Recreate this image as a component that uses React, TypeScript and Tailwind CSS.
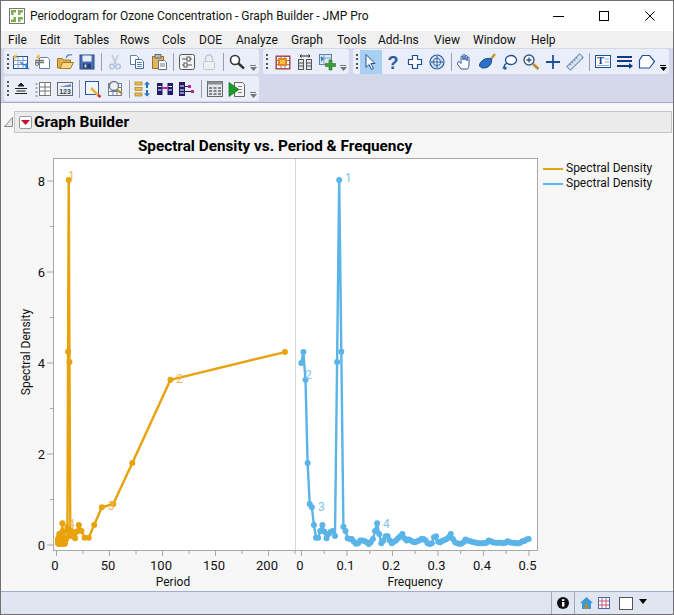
import React from 'react';

const vals = [4.0,4.24,3.63,1.8,0.9,0.83,0.44,0.16,0.16,0.31,0.44,0.29,0.15,0.24,0.29,0.31,0.2,4.02,8.02,4.25,0.4,0.31,0.15,0.13,0.13,0.07,0.03,0.04,0.1,0.1,0.09,0.06,0.02,0.06,0.13,0.31,0.48,0.24,0.04,0.1,0.19,0.19,0.1,0.04,0.07,0.1,0.15,0.19,0.24,0.15,0.1,0.12,0.1,0.07,0.06,0.08,0.1,0.13,0.13,0.1,0.04,0.02,0.04,0.17,0.19,0.07,0.06,0.09,0.11,0.13,0.17,0.24,0.13,0.06,0.04,0.03,0.03,0.06,0.12,0.1,0.09,0.07,0.06,0.05,0.04,0.04,0.04,0.04,0.05,0.1,0.08,0.06,0.05,0.05,0.05,0.05,0.04,0.05,0.08,0.06,0.05,0.05,0.04,0.04,0.05,0.08,0.09,0.12,0.13];
const yOf = (v: number) => 545 - v * 45.5;
const freqPts = vals.map((v, k) => [301.3 + (k / 216) * 454.8, yOf(v)] as const);
const perPts = vals.slice(1).map((v, i) => [56 + (1.06 * 216) / (i + 1), yOf(v)] as const);

function Series({ pts, color }: { pts: readonly (readonly [number, number])[]; color: string }) {
  return (
    <g>
      <polyline points={pts.map((p) => p.join(',')).join(' ')} fill="none" stroke={color} strokeWidth={2.4} strokeLinejoin="round" />
      {pts.map((p, i) => <circle key={i} cx={p[0]} cy={p[1]} r={3} fill={color} />)}
    </g>
  );
}

function Chart() {
  const yMajor = [8, 6, 4, 2, 0];
  const yMinor = [7, 5, 3, 1];
  const xLeft = [0, 50, 100, 150, 200];
  const xRight = ['0', '0.1', '0.2', '0.3', '0.4', '0.5'];
  return (
    <svg width={537} height={435} viewBox="1 155 537 435" className="block shrink-0 font-['Roboto',sans-serif]">
      <rect x={53.5} y={158.5} width={484} height={392} fill="#fff" stroke="#a8a8a8" />
      <line x1={295.5} x2={295.5} y1={159} y2={550} stroke="#d9d9d9" />
      {yMajor.map((v) => (
        <g key={v}>
          <line x1={47} x2={53} y1={yOf(v)} y2={yOf(v)} stroke="#a8a8a8" />
          <text x={45} y={yOf(v) + 4.5} textAnchor="end" fontSize={13} fill="#111">{v}</text>
        </g>
      ))}
      {yMinor.map((v) => <line key={v} x1={50} x2={53} y1={yOf(v)} y2={yOf(v)} stroke="#a8a8a8" />)}
      {Array.from({ length: 10 }, (_, i) => (
        <line key={i} x1={56.5 + i * 26.5} x2={56.5 + i * 26.5} y1={551} y2={i % 2 ? 554 : 556} stroke="#a8a8a8" />
      ))}
      {Array.from({ length: 11 }, (_, i) => (
        <line key={i} x1={301.5 + i * 22.74} x2={301.5 + i * 22.74} y1={551} y2={i % 2 ? 554 : 556} stroke="#a8a8a8" />
      ))}
      {xLeft.map((v, i) => <text key={v} x={55 + i * 53} y={570} textAnchor="middle" fontSize={13} fill="#111">{v}</text>)}
      {xRight.map((v, i) => <text key={v} x={300 + i * 45.5} y={570} textAnchor="middle" fontSize={13} fill="#111">{v}</text>)}
      <text x={173} y={586} textAnchor="middle" fontSize={12} fill="#111">Period</text>
      <text x={415} y={586} textAnchor="middle" fontSize={12} fill="#111">Frequency</text>
      <text transform="translate(30 352) rotate(-90)" textAnchor="middle" fontSize={12} fill="#111">Spectral Density</text>
      <Series pts={perPts} color="#e8a20c" />
      <Series pts={freqPts} color="#5ab4e8" />
      <g fontSize={12} fill="#eeb84f">
        <text x={68} y={180}>1</text>
        <text x={176} y={383}>2</text>
        <text x={108} y={510}>3</text>
        <text x={68} y={528}>4</text>
      </g>
      <g fontSize={12} fill="#7fc4ec">
        <text x={345} y={182}>1</text>
        <text x={305} y={379}>2</text>
        <text x={318} y={511}>3</text>
        <text x={383} y={528}>4</text>
      </g>
    </svg>
  );
}

/* ---- toolbar icons: 18x18 drawings ---- */
const B = '#1c4f9c';
const Y = '#f0bd45';
type P = { children: React.ReactNode };
const Ico = ({ children }: P) => <svg width={18} height={18} viewBox="0 0 18 18" className="block">{children}</svg>;

const grid = (
  <g stroke="#6b7f9e" fill="none">
    <rect x="2.5" y="3.5" width="13" height="12" fill="#fff" />
    <path d="M2.5 7.5h13M2.5 11.5h13M7 3.5v12M11 3.5v12" />
  </g>
);

const icons: Record<string, React.ReactNode> = {
  newTable: <><rect x="1.5" y="3.5" width="14" height="12" fill="#fff" stroke={B} /><path d="M1.5 7.5h14M1.5 11.5h14M6 3.5v12M11 3.5v12" stroke="#7d9cc8" /><path d="M2 1l1 1.5 2-1-.7 2 1.7 1-2 .4L3 7 2.3 5 0 4.5l2-1z" fill={Y} /><path d="M8 9l4 3 3-1-1 3 3 2" stroke="#2f7fd0" strokeWidth="1.5" fill="none" /></>,
  newScript: <><path d="M5.5 4.5h8l2 2v9h-10z" fill="#fff" stroke="#5c7fb0" /><path d="M1 7.5h9M1 9.5h9" stroke="#777" strokeWidth="1.4" /><circle cx="3" cy="11" r="1.6" fill="none" stroke="#777" /><path d="M3 1l1 1.5 2-1-.7 2 1.7 1-2 .4L4 7 3.3 5 1 4.5l2-1z" fill={Y} /></>,
  open: <><path d="M1.5 5.5h5l1 1.5h7v8h-13z" fill="#e3b04f" stroke="#a67a22" /><path d="M4 15.5l2.5-6h11l-3 6z" fill="#f7d98b" stroke="#a67a22" /><path d="M10 5c1-3 4-4 6-3" stroke="#5b92cf" strokeWidth="1.4" fill="none" /></>,
  save: <><rect x="2" y="2" width="14" height="14" fill="#4a6fb5" stroke="#2b4a86" /><rect x="4.5" y="2.5" width="9" height="6" fill="#e7edf7" /><rect x="5" y="10.5" width="8" height="5" fill="#27406f" /><rect x="6.5" y="11.5" width="2" height="3" fill="#c9d5e8" /></>,
  cut: <g opacity=".45"><path d="M6 2l4 9M12 2l-4 9" stroke="#8a9cb5" strokeWidth="1.6" /><circle cx="6" cy="13.5" r="2.3" fill="none" stroke="#6f8fbf" strokeWidth="1.5" /><circle cx="12" cy="13.5" r="2.3" fill="none" stroke="#6f8fbf" strokeWidth="1.5" /></g>,
  copy: <><path d="M2.5 2.5h6l2 2v7h-8z" fill="#fff" stroke="#5c7fb0" /><path d="M7.5 6.5h6l2 2v7h-8z" fill="#fff" stroke="#3f69a8" /><path d="M9 9.5h5M9 11.5h5M9 13.5h5" stroke="#5c7fb0" /></>,
  paste: <><rect x="2.5" y="3.5" width="11" height="12" fill="#e2b661" stroke="#9a7426" /><rect x="5" y="1.5" width="6" height="3.5" fill="#bbb" stroke="#666" /><path d="M8.5 7.5h6l2 2v7h-8z" fill="#fff" stroke="#5c6f90" /><path d="M10 11h5M10 13h5" stroke="#778" /></>,
  sliders: <><rect x="1.5" y="1.5" width="15" height="15" rx="2" fill="#f4f4f4" stroke="#555" /><path d="M4 6h10M4 12h10" stroke="#555" /><rect x="9" y="4" width="3" height="4" fill="#fff" stroke="#555" /><rect x="6" y="10" width="3" height="4" fill="#fff" stroke="#555" /></>,
  lock: <><rect x="3.5" y="8.5" width="11" height="8" rx="1" fill="#eef0f4" stroke="#c3c7cf" /><path d="M5.5 8.5V5.5a3.5 3.5 0 017 0v3" fill="none" stroke="#c3c7cf" strokeWidth="1.4" /></>,
  search: <><circle cx="7" cy="7" r="4.5" fill="#fff" stroke="#333" strokeWidth="1.6" /><path d="M10.5 10.5l5.5 5" stroke="#333" strokeWidth="2.4" /></>,
  heat: <>{grid}<rect x="4" y="5" width="9" height="8" fill="#ef7d22" /><rect x="6" y="7" width="5" height="4" fill="#f8c940" /><rect x="2" y="3" width="14" height="13" fill="none" stroke="#b33" /></>,
  cols: <><path d="M4 3h10M4 3l1.5-1.5M4 3l1.5 1.5M14 3l-1.5-1.5M14 3l-1.5 1.5" stroke="#222" fill="none" /><rect x="2.5" y="6.5" width="5" height="10" fill="#dfe4ea" stroke="#555" /><rect x="10.5" y="6.5" width="5" height="10" fill="#dfe4ea" stroke="#555" /><path d="M2.5 10h5M2.5 13h5M10.5 10h5M10.5 13h5" stroke="#555" /></>,
  addTable: <><rect x="1.5" y="1.5" width="12" height="10" fill="#dbe8f3" stroke="#5c7fb0" /><path d="M1.5 5h12M6 1.5v10" stroke="#7fa3c7" /><path d="M3 3l3 3-3 3" fill="#2f7fd0" /><path d="M11 7h3v3.5h3.5v3H14V17h-3v-3.5H7.5v-3H11z" fill="#3f9a3a" stroke="#2a6f28" strokeWidth=".6" /></>,
  arrow: <path d="M4 1.5v13l3-3 2.5 5 2-1-2.5-5h4z" fill="#fff" stroke={B} />,
  help: <text x="9" y="15.5" textAnchor="middle" fontSize="18" fontWeight="800" fill="#2c5aa0" fontFamily="Liberation Sans">?</text>,
  cross: <path d="M6.5 2.5h5v4h4v5h-4v4h-5v-4h-4v-5h4z" fill="#fff" stroke={B} strokeWidth="1.2" />,
  target: <><circle cx="9" cy="9" r="7" fill="#cfe0f2" stroke="#2c5aa0" strokeWidth="1.2" /><circle cx="9" cy="9" r="3.6" fill="#fff" stroke="#2c5aa0" /><path d="M9 3v12M3 9h12" stroke="#2c5aa0" /></>,
  hand: <path d="M5 16c-2-3-4-5-3.500-6.500S4 9 5 10.500V4c0-1.500 2-1.500 2 0v3-4.500c0-1.500 2-1.500 2 0V7 3.500c0-1.500 2-1.500 2 0V8 5c0-1.500 2-1.500 2 0v7c0 2-1 3-1.500 4z" fill="#fff" stroke="#2c5aa0" />,
  brush: <><path d="M13 6L17 1" stroke="#c9973a" strokeWidth="2.5" /><path d="M1.500 12c1-5 8-8 12-6 1 4-2 9-8 9-2 0-4-1-4-3z" fill="#2a70c8" stroke="#174a8f" /></>,
  lasso: <><ellipse cx="11" cy="7" rx="5.500" ry="4.500" fill="#fff" stroke={B} strokeWidth="1.3" /><path d="M7 10c-2 1-3 3-3 4.500M4 14.500c0 2 2 2 2 .5s-3-1-3 .5" fill="none" stroke={B} strokeWidth="1.3" /></>,
  zoom: <><circle cx="7" cy="7" r="5" fill="#fff" stroke="#39597f" strokeWidth="1.4" /><path d="M4.500 7h5M7 4.500v5" stroke={B} strokeWidth="1.300" /><path d="M11 11l5.500 5" stroke="#b98a2c" strokeWidth="2.500" /></>,
  plus: <path d="M9 2v14M2 9h14" stroke={B} strokeWidth="1.800" />,
  ruler: <g transform="rotate(-45 9 9)"><rect x="0" y="6.500" width="18" height="5" fill="#dbe4f1" stroke="#6b87b5" /><path d="M4 6.500v2M7 6.500v2M10 6.500v2M13 6.500v2" stroke="#6b87b5" /></g>,
  textBox: <><rect x="1.500" y="2.500" width="15" height="12" fill="#fff" stroke="#1c4f9c" /><path d="M11 6h4M11 9h4M3 12.500h12" stroke="#8fa9cc" /><text x="6.500" y="11" textAnchor="middle" fontSize="10" fontWeight="700" fill="#0e3a80" fontFamily="Liberation Serif">T</text></>,
  lines: <><path d="M1 4h15M1 8h15" stroke="#14397c" strokeWidth="2" /><path d="M1 13h13" stroke="#14397c" strokeWidth="2" /><path d="M13 10l4 3-4 3z" fill="#14397c" /></>,
  shape: <path d="M4.500 2.500h7l5 6-5 6.500H1.500V7z" fill="#fff" stroke="#1c4f9c" strokeWidth="1.200" />,
  align: <path d="M9 3l3 3H6zM3 8.500h12M4.500 11h9M3 13.500h12" stroke="#222" fill="#222" />,
  gridDots: <><path d="M1.500 4h2M1.500 8h2M1.500 12h2M1.500 16h2" stroke="#666" /><rect x="5.500" y="2.500" width="11" height="13" fill="#fff" stroke="#777" /><path d="M5.500 7h11M5.500 11h11M11 2.500v13" stroke="#777" /></>,
  nums: <><rect x="1.500" y="2.500" width="15" height="13" fill="#eef2f7" stroke="#667" /><path d="M3 7l12-3v3z" fill="#6a93c4" /><text x="9" y="14" textAnchor="middle" fontSize="7" fontWeight="700" fill="#345" fontFamily="Liberation Sans">123</text></>,
  pencil: <><rect x="1.500" y="1.500" width="13" height="13" fill="#f2f6fc" stroke="#2c5aa0" /><path d="M7 8l7 7" stroke="#e8b33d" strokeWidth="2.500" /><path d="M14 15l2.500 2" stroke="#d22" strokeWidth="2.500" /></>,
  tableSearch: <>{grid}<circle cx="8" cy="6" r="4.500" fill="#eef4fb" stroke="#777" strokeWidth="1.300" /><path d="M11 9.500l5 4.500" stroke="#b98a2c" strokeWidth="2.200" /></>,
  sort: <><rect x="1" y="2" width="7" height="3" fill={Y} stroke="#96711f" strokeWidth=".6" /><rect x="1" y="7.500" width="7" height="3" fill={Y} stroke="#96711f" strokeWidth=".6" /><rect x="1" y="13" width="7" height="3" fill={Y} stroke="#96711f" strokeWidth=".6" /><path d="M13 1.500l3 3h-2V8h-2V4.500h-2zM13 16.500l3-3h-2V10h-2v3.500h-2z" fill="#2a6fc0" /></>,
  join: <><rect x="1" y="3" width="5.500" height="12" fill="#231a68" /><rect x="11.500" y="3" width="5.500" height="12" fill="#231a68" /><path d="M2 6.500h3.500M2 10h3.500M12.500 6.500H16M12.500 10H16" stroke="#fff" /><path d="M6.500 8h5" stroke="#c0209a" strokeWidth="2" /></>,
  tree: <><rect x="1" y="2" width="6" height="14" fill="#231a68" /><path d="M2 6h4M2 10h4M2 13h4" stroke="#fff" /><rect x="10" y="5" width="3" height="3" fill="#c0209a" /><rect x="13" y="10" width="3" height="3" fill="#c0209a" /><path d="M7 6.500h3M7 11.500h6" stroke="#231a68" strokeWidth="1.200" /></>,
  calc: <><rect x="1.500" y="1.500" width="15" height="15" fill="#e4e7ec" stroke="#666" /><rect x="1.500" y="1.500" width="15" height="3" fill="#8b8f96" /><path d="M3 8h3M7.500 8h3M12 8h3M3 11h3M7.500 11h3M12 11h3M3 14h3M7.500 14h3M12 14h3" stroke="#666" strokeWidth="1.500" /></>,
  run: <><path d="M6.500 2.500h8l2 2v12h-10z" fill="#f4f4f4" stroke="#666" /><path d="M10 6.500h4M11 9.500h3M10 12.500h4" stroke="#888" /><path d="M1 2.500L11 9.500 1 16.500z" fill="#1d9a2c" stroke="#0f6b1c" strokeWidth=".7" /></>,
};

const Btn = ({ n, active }: { n: string; active?: boolean }) => (
  <div className={`flex h-[24px] w-[22px] shrink-0 items-center justify-center ${active ? 'bg-[#a9d0f2]' : ''}`}>
    <Ico>{icons[n]}</Ico>
  </div>
);
const Sep = () => <div className="mx-[2.5px] h-[18px] w-px shrink-0 bg-[#9a9fa8]" />;
const Grip = () => (
  <div className="flex h-[16px] w-[3px] shrink-0 flex-col justify-between">
    {[0, 1, 2, 3].map((i) => <div key={i} className="h-[2px] w-[2px] bg-[#555]" />)}
  </div>
);
const More = ({ dark }: { dark?: boolean }) => (
  <div className="ml-auto flex w-[10px] shrink-0 flex-col items-center gap-[1px] self-end pb-[3px]">
    <div className={`h-px w-[6px] ${dark ? 'bg-black' : 'bg-[#777]'}`} />
    <svg width={7} height={4} viewBox="0 0 7 4" className="block"><path d="M0 0h7L3.500 4z" fill={dark ? '#000' : '#777'} /></svg>
  </div>
);
const Bar = ({ className, children }: { className: string; children: React.ReactNode }) => (
  <div className={`flex h-[25px] items-center rounded-[3px] bg-[#e9eef8] pl-[3px] pr-px ${className}`}>{children}</div>
);

const menu: [string, string][] = [
  ['File', 'w-[32px]'], ['Edit', 'w-[34px]'], ['Tables', 'w-[46px]'], ['Rows', 'w-[42px]'], ['Cols', 'w-[37px]'],
  ['DOE', 'w-[37px]'], ['Analyze', 'w-[55px]'], ['Graph', 'w-[46px]'], ['Tools', 'w-[41px]'], ['Add-Ins', 'w-[56px]'],
  ['View', 'w-[39px]'], ['Window', 'w-[58px]'], ['Help', 'w-[36px]'],
];

export default function App() {
  return (
    <div className="flex h-[615px] w-[674px] flex-col overflow-hidden border border-[#707070] bg-[#f7f7f7] font-['Roboto',sans-serif] text-[#111]">
      {/* title bar */}
      <div className="flex h-[30px] shrink-0 items-center bg-white pl-[8px]">
        <svg width={16} height={16} viewBox="0 0 16 16" className="block shrink-0">
          <rect x=".5" y=".5" width="15" height="15" fill="#fff" stroke="#777" />
          <path d="M2 2h5v2.500H4.500V7H2zM14 2H9v5h2.500V4.500H14zM2 14h5V9H4.500v2.500H2zM9 9h5v2.500h-2.500V14H9z" fill="#7fae4c" />
        </svg>
        <span className="ml-[5px] flex-1 text-[12px] leading-none">Periodogram for Ozone Concentration - Graph Builder - JMP Pro</span>
        <div className="flex w-[135px] items-center">
          <div className="ml-[15px] h-px w-[11px] bg-black" />
          <div className="ml-[35px] h-[10px] w-[10px] border border-black" />
          <svg width={10} height={10} viewBox="0 0 10 10" className="ml-[36px] block"><path d="M.5.500l9 9M9.500.500l-9 9" stroke="#000" /></svg>
        </div>
      </div>
      {/* menu */}
      <div className="flex h-[17px] shrink-0 items-center bg-[#f0f0f0] pl-[7px] text-[12px] leading-none">
        {menu.map(([t, w]) => <span key={t} className={w}>{t}</span>)}
      </div>
      {/* toolbars */}
      <div className="flex h-[55px] shrink-0 flex-col gap-[2px] border-b border-[#a3abcf] bg-[#d3d9ea] pl-[3px] pt-px">
        <div className="flex gap-[4px]">
          <Bar className="w-[255px]">
            <Grip /><Btn n="newTable" /><Btn n="newScript" /><Btn n="open" /><Btn n="save" /><Sep /><Btn n="cut" /><Btn n="copy" /><Btn n="paste" /><Sep /><Btn n="sliders" /><Btn n="lock" /><Sep /><Btn n="search" /><More />
          </Bar>
          <Bar className="w-[86px]">
            <Grip /><div className="w-[3px]" /><Btn n="heat" /><Btn n="cols" /><Btn n="addTable" /><More />
          </Bar>
          <Bar className="w-[316px]">
            <Grip /><div className="w-px" /><Btn n="arrow" active /><Btn n="help" /><Btn n="cross" /><Btn n="target" /><Sep /><Btn n="hand" /><Btn n="brush" /><Btn n="lasso" /><Btn n="zoom" /><Btn n="plus" /><Btn n="ruler" /><Sep /><Btn n="textBox" /><Btn n="lines" /><Btn n="shape" /><More dark />
          </Bar>
        </div>
        <Bar className="w-[255px]">
          <Grip /><div className="w-px" /><Btn n="align" /><Btn n="gridDots" /><Btn n="nums" /><Sep /><Btn n="pencil" /><Btn n="tableSearch" /><Sep /><Btn n="sort" /><Btn n="join" /><Btn n="tree" /><Sep /><Btn n="calc" /><Btn n="run" /><More />
        </Bar>
      </div>
      {/* content */}
      <div className="flex min-h-0 flex-1 flex-col">
        <div className="mt-[8px] flex h-[22px] shrink-0 items-center pl-[3px] pr-px">
          <svg width={9} height={10} viewBox="0 0 9 10" className="block shrink-0"><path d="M8.500.500v9h-8z" fill="#e8e8e8" stroke="#8a8a8a" /></svg>
          <div className="ml-[1px] flex h-[22px] flex-1 items-center border border-[#c6c6c6] bg-[#ebebeb] pl-[4px]">
            <div className="flex h-[13px] w-[13px] items-center justify-center rounded-[2px] border border-[#9a9a9a] bg-white">
              <svg width={9} height={5} viewBox="0 0 9 5" className="block"><path d="M0 0h9L4.500 5z" fill="#c8102e" /></svg>
            </div>
            <span className="ml-[2px] pt-[2px] text-[15.500px] font-bold leading-none text-black">Graph Builder</span>
          </div>
        </div>
        <div className="mt-[6px] h-[16px] w-[548px] shrink-0 text-center text-[15.300px] font-bold leading-none text-black">Spectral Density vs. Period &amp; Frequency</div>
        <div className="flex">
          <Chart />
          <div className="ml-[5px] mt-[6px] flex flex-col text-[12px] leading-[15px]">
            <div className="flex items-center gap-[3px]"><div className="h-[2px] w-[20px] bg-[#e8a20c]" /><span>Spectral Density</span></div>
            <div className="flex items-center gap-[3px]"><div className="h-[2px] w-[20px] bg-[#5ab4e8]" /><span>Spectral Density</span></div>
          </div>
        </div>
      </div>
      {/* status bar */}
      <div className="flex h-[23px] shrink-0 items-center justify-end border-t border-[#a3abcf] bg-[#e0e6f1]">
        <div className="h-[22px] w-px bg-[#a8a8b0]" />
        <div className="flex w-[22px] justify-center">
          <svg width={12} height={12} viewBox="0 0 12 12" className="block"><circle cx="6" cy="6" r="6" fill="#111" /><rect x="5" y="5" width="2.400" height="4.500" fill="#fff" /><rect x="5" y="2.200" width="2.400" height="1.800" fill="#fff" /></svg>
        </div>
        <div className="h-[22px] w-px bg-[#a8a8b0]" />
        <div className="ml-[5px] flex items-center gap-[5px]">
          <svg width={13} height={12} viewBox="0 0 13 12" className="block"><path d="M6.500 0L13 6h-2v6H2V6H0z" fill="#3a9ad9" /><rect x="5" y="7" width="3" height="5" fill="#b98a2c" /></svg>
          <svg width={12} height={12} viewBox="0 0 12 12" className="block"><rect x=".5" y=".5" width="11" height="11" fill="#fff" stroke="#3f69a8" /><path d="M.5 4h11M.5 8h11M4 .5v11M8 .5v11" stroke="#c05a7a" /></svg>
        </div>
        <div className="ml-[9px] h-[13px] w-[14px] border border-[#555] bg-white" />
        <svg width={8} height={5} viewBox="0 0 8 5" className="ml-[6px] mb-[3px] block"><path d="M0 0h8L4 5z" fill="#000" /></svg>
        <div className="ml-[13px] w-[13px]" />
      </div>
    </div>
  );
}
